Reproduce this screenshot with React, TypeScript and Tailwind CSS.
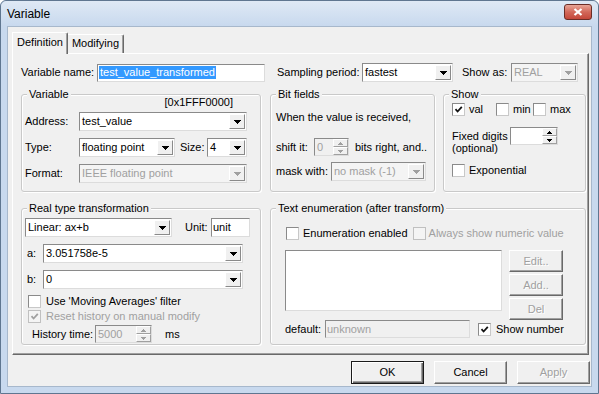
import React from 'react';

type Ctl = { className?: string; disabled?: boolean; children?: React.ReactNode };

const Arrow = ({ disabled }: { disabled?: boolean }) => (
  <svg width="7" height="4" viewBox="0 0 7 4" shapeRendering="crispEdges">
    <path d="M0 0h7L3.5 4z" fill={disabled ? '#a0a0a0' : '#000'} />
  </svg>
);

const Combo = ({ className, disabled, children }: Ctl) => (
  <div
    className={`${className} h-[19px] flex border border-t-[#8a8a8a] border-l-[#8a8a8a] border-r-[#dcdcdc] border-b-[#dcdcdc] ${disabled ? 'bg-[#f4f4f4] text-[#a0a0a0]' : 'bg-white'}`}
  >
    <div className="flex-1 flex items-center pl-[2px] whitespace-nowrap overflow-hidden">{children}</div>
    <div className="w-[16px] m-[1px] flex items-center justify-center bg-[#f0f0f0] border border-t-white border-l-white border-r-[#8a8a8a] border-b-[#8a8a8a]">
      <Arrow disabled={disabled} />
    </div>
  </div>
);

const Edit = ({ className, disabled, children }: Ctl) => (
  <div
    className={`${className} flex items-center pl-[1px] border border-t-[#8a8a8a] border-l-[#8a8a8a] border-r-[#dcdcdc] border-b-[#dcdcdc] whitespace-nowrap overflow-hidden ${disabled ? 'bg-[#f0f0f0] text-[#a0a0a0]' : 'bg-white'}`}
  >
    {children}
  </div>
);

const Spin = ({ className, disabled, children }: Ctl) => {
  const c = disabled ? '#a0a0a0' : '#000';
  return (
    <div
      className={`${className} h-[18px] flex border border-t-[#8a8a8a] border-l-[#8a8a8a] border-r-[#dcdcdc] border-b-[#dcdcdc] ${disabled ? 'bg-[#f0f0f0] text-[#a0a0a0]' : 'bg-white'}`}
    >
      <div className="flex-1 flex items-center pl-[2px]">{children}</div>
      <div className="w-[15px] flex flex-col">
        <div className="flex-1 flex items-center justify-center bg-[#f0f0f0] border border-t-white border-l-white border-r-[#a0a0a0] border-b-[#a0a0a0]">
          <svg width="5" height="3" viewBox="0 0 5 3" shapeRendering="crispEdges">
            <path d="M2.5 0L5 3H0z" fill={c} />
          </svg>
        </div>
        <div className="flex-1 flex items-center justify-center bg-[#f0f0f0] border border-t-white border-l-white border-r-[#a0a0a0] border-b-[#a0a0a0]">
          <svg width="5" height="3" viewBox="0 0 5 3" shapeRendering="crispEdges">
            <path d="M0 0h5L2.5 3z" fill={c} />
          </svg>
        </div>
      </div>
    </div>
  );
};

const Check = ({ checked, disabled }: { checked?: boolean; disabled?: boolean }) => (
  <span
    className={`w-[13px] h-[13px] shrink-0 flex items-center justify-center border ${disabled ? 'border-[#c0c0c0] bg-[#f4f4f4]' : 'border-t-[#8a8a8a] border-l-[#8a8a8a] border-r-[#c8c8c8] border-b-[#c8c8c8] bg-white'}`}
  >
    {checked && (
      <svg width="9" height="9" viewBox="0 0 9 9">
        <path d="M1.5 4.2L3.6 6.5L7.8 1.8" fill="none" stroke={disabled ? '#a0a0a0' : '#111'} strokeWidth="1.8" />
      </svg>
    )}
  </span>
);

const Btn = ({ className, disabled, def, children }: Ctl & { def?: boolean }) => (
  <div
    className={`${className} flex items-center justify-center bg-[#f0f0f0] border ${
      def
        ? 'border-[#1a1a1a] shadow-[inset_1px_1px_0_#fff,inset_-1px_-1px_0_#696969,inset_-2px_-2px_0_#a0a0a0]'
        : 'border-t-white border-l-white border-r-[#696969] border-b-[#696969] shadow-[inset_-1px_-1px_0_#a0a0a0]'
    } ${disabled ? 'text-[#a0a0a0] [text-shadow:1px_1px_0_#fff]' : ''}`}
  >
    {children}
  </div>
);

const Group = ({ title, className, children }: { title: string; className: string; children?: React.ReactNode }) => (
  <div className={`relative border border-[#c9c9c9] rounded-[3px] shadow-[inset_1px_1px_0_#fff,1px_1px_0_#fff] ${className}`}>
    <span className="absolute -top-[7px] left-[5px] px-[2px] bg-[#f0f0f0] leading-[13px] whitespace-nowrap">{title}</span>
    {children}
  </div>
);

export default function App() {
  return (
    <div className="w-[599px] h-[394px] bg-white font-['Liberation_Sans',Arial,sans-serif] text-[11px] leading-[13px] text-black">
      <div className="w-full h-full flex flex-col bg-[#c8d9ee] border border-[#5f7690] rounded-t-[6px]">
        {/* title bar */}
        <div className="h-[25px] flex items-start justify-between pl-[6px] pr-[6px] bg-linear-to-b from-[#dfe9f5] to-[#c8d9ee] rounded-t-[6px]">
          <span className="pt-[6px] text-[12px] leading-[14px]">Variable</span>
          <div className="w-[28px] h-[16px] mt-[3px] rounded-[3px] border border-[#6b2d26] bg-linear-to-b from-[#e8a597] via-[#d2685a] to-[#c4473a] flex items-center justify-center">
            <svg width="10" height="8" viewBox="0 0 10 8">
              <path d="M1.5 1L8.5 7M8.5 1L1.5 7" stroke="#fff" strokeWidth="2.2" />
            </svg>
          </div>
        </div>

        {/* client */}
        <div className="flex-1 mx-[6px] mb-[6px] border border-[#a7b8cc] bg-[#f0f0f0] flex flex-col pl-[4px] pt-[5px]">
          {/* tabs */}
          <div className="h-[21px] flex items-end">
            <div className="relative z-10 w-[56px] h-[22px] -mb-[1px] bg-[#f0f0f0] flex justify-center pt-[3px] border-t border-l border-r border-t-white border-l-white border-r-[#696969] rounded-tr-[2px] shadow-[inset_-1px_0_0_#a0a0a0]">
              Definition
            </div>
            <div className="w-[56px] h-[19px] flex justify-center pt-[2px] border-t border-r border-t-white border-r-[#696969] rounded-tr-[2px] shadow-[inset_-1px_0_0_#a0a0a0]">
              Modifying
            </div>
          </div>

          {/* tab page */}
          <div className="w-[577px] h-[302px] flex flex-col pl-[8px] border border-t-white border-l-white border-r-[#696969] border-b-[#696969] shadow-[inset_-1px_-1px_0_#a0a0a0]">
            {/* top row */}
            <div className="mt-[9px] h-[19px] flex items-center">
              <span className="w-[76px]">Variable name:</span>
              <Edit className="w-[168px] h-[18px]">
                <span className="bg-[#3399ff] text-white px-[1px]">test_value_transformed</span>
              </Edit>
              <span className="ml-[12px] w-[85px]">Sampling period:</span>
              <Combo className="w-[91px]">fastest</Combo>
              <span className="ml-[9px] w-[49px]">Show as:</span>
              <Combo className="w-[67px]" disabled>
                REAL
              </Combo>
            </div>

            {/* row 1 */}
            <div className="mt-[12px] flex">
              <Group title="Variable" className="w-[240px] h-[98px] flex flex-col pl-[3px]">
                <div className="mt-[1px] flex justify-end pr-[27px]">[0x1FFF0000]</div>
                <div className="mt-[3px] flex items-center">
                  <span className="w-[54px]">Address:</span>
                  <Combo className="w-[168px]">test_value</Combo>
                </div>
                <div className="mt-[7px] flex items-center">
                  <span className="w-[54px]">Type:</span>
                  <Combo className="w-[96px]">floating point</Combo>
                  <span className="ml-[5px] w-[27px]">Size:</span>
                  <Combo className="w-[40px]">4</Combo>
                </div>
                <div className="mt-[7px] flex items-center">
                  <span className="w-[54px]">Format:</span>
                  <Combo className="w-[168px]" disabled>
                    IEEE floating point
                  </Combo>
                </div>
              </Group>

              <Group title="Bit fields" className="ml-[9px] w-[165px] h-[98px] flex flex-col pl-[5px]">
                <div className="mt-[16px]">When the value is received,</div>
                <div className="mt-[14px] flex items-center">
                  <span className="w-[38px]">shift it:</span>
                  <Spin className="w-[35px]" disabled>
                    0
                  </Spin>
                  <span className="ml-[6px]">bits right, and..</span>
                </div>
                <div className="mt-[6px] flex items-center">
                  <span className="w-[55px]">mask with:</span>
                  <Combo className="w-[95px]" disabled>
                    no mask (-1)
                  </Combo>
                </div>
              </Group>

              <Group title="Show" className="ml-[8px] w-[143px] h-[98px] flex flex-col pl-[8px]">
                <div className="mt-[8px] flex items-center">
                  <div className="w-[44px] flex items-center">
                    <Check checked />
                    <span className="ml-[4px]">val</span>
                  </div>
                  <div className="w-[37px] flex items-center">
                    <Check />
                    <span className="ml-[4px]">min</span>
                  </div>
                  <div className="flex items-center">
                    <Check />
                    <span className="ml-[4px]">max</span>
                  </div>
                </div>
                <div className="mt-[11px] flex items-start">
                  <div className="w-[58px] mt-[3px] leading-[12px]">
                    Fixed digits
                    <br />
                    (optional)
                  </div>
                  <Spin className="w-[48px]" />
                </div>
                <div className="mt-[10px] flex items-center">
                  <Check />
                  <span className="ml-[4px]">Exponential</span>
                </div>
              </Group>
            </div>

            {/* row 2 */}
            <div className="mt-[16px] flex">
              <Group title="Real type transformation" className="w-[240px] h-[137px] flex flex-col pl-[3px]">
                <div className="mt-[9px] flex items-center">
                  <Combo className="w-[147px]">Linear: ax+b</Combo>
                  <span className="ml-[13px] w-[26px]">Unit:</span>
                  <Edit className="w-[39px] h-[19px]">unit</Edit>
                </div>
                <div className="mt-[7px] flex items-center">
                  <span className="ml-[2px] w-[16px]">a:</span>
                  <Combo className="w-[200px]">3.051758e-5</Combo>
                </div>
                <div className="mt-[7px] flex items-center">
                  <span className="ml-[2px] w-[16px]">b:</span>
                  <Combo className="w-[200px]">0</Combo>
                </div>
                <div className="mt-[6px] flex items-center ml-[3px]">
                  <Check />
                  <span className="ml-[5px]">Use 'Moving Averages' filter</span>
                </div>
                <div className="mt-[2px] flex items-center ml-[3px]">
                  <Check checked disabled />
                  <span className="ml-[5px] text-[#a0a0a0]">Reset history on manual modify</span>
                </div>
                <div className="mt-[2px] flex items-center">
                  <span className="ml-[7px] w-[63px]">History time:</span>
                  <Spin className="w-[57px]" disabled>
                    5000
                  </Spin>
                  <span className="ml-[13px]">ms</span>
                </div>
              </Group>

              <Group title="Text enumeration (after transform)" className="ml-[9px] w-[316px] h-[137px] flex flex-col">
                <div className="mt-[18px] pl-[15px] flex items-center">
                  <Check />
                  <span className="ml-[4px]">Enumeration enabled</span>
                  <span className="ml-[5px]">
                    <Check disabled />
                  </span>
                  <span className="ml-[3px] text-[#a0a0a0]">Always show numeric value</span>
                </div>
                <div className="mt-[10px] flex items-start">
                  <div className="ml-[14px] w-[217px] h-[61px] bg-white border border-t-[#8a8a8a] border-l-[#8a8a8a] border-r-[#dcdcdc] border-b-[#dcdcdc]" />
                  <div className="ml-[7px] w-[54px] flex flex-col gap-[2px]">
                    <Btn className="h-[22px]" disabled>
                      Edit..
                    </Btn>
                    <Btn className="h-[22px]" disabled>
                      Add..
                    </Btn>
                    <Btn className="h-[22px]" disabled>
                      Del
                    </Btn>
                  </div>
                </div>
                <div className="flex items-center h-[18px]">
                  <span className="ml-[14px] w-[40px]">default:</span>
                  <Edit className="w-[145px] h-[18px]" disabled>
                    unknown
                  </Edit>
                  <span className="ml-[8px]">
                    <Check checked />
                  </span>
                  <span className="ml-[5px]">Show number</span>
                </div>
              </Group>
            </div>
          </div>

          {/* buttons */}
          <div className="mt-[6px] flex justify-end gap-[10px] pr-[1px]">
            <Btn className="w-[73px] h-[23px]" def>
              OK
            </Btn>
            <Btn className="w-[73px] h-[23px]">Cancel</Btn>
            <Btn className="w-[73px] h-[23px]" disabled>
              Apply
            </Btn>
          </div>
        </div>
      </div>
    </div>
  );
}
